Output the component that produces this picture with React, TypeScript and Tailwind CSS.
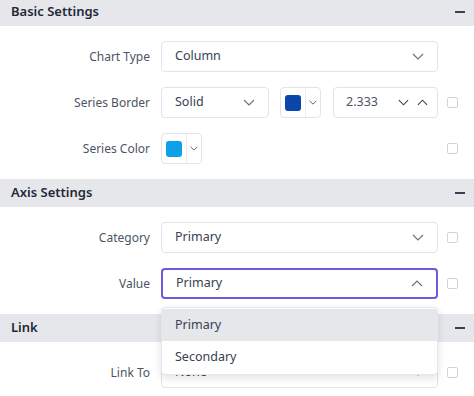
import { ReactNode } from "react";

const font = { fontFamily: '"Noto Sans", "Open Sans", sans-serif' };

const Chevron = ({ up = false, className = "" }: { up?: boolean; className?: string }) => (
  <svg viewBox="0 0 12 7" className={className} fill="none" stroke="currentColor" strokeWidth="1.2">
    {up ? <path d="M1 6l5-5 5 5" /> : <path d="M1 1l5 5 5-5" />}
  </svg>
);

const Check = () => <div className="ml-[9px] h-[11px] w-[11px] rounded-[2px] border border-[#d4d4d8] bg-white" />;

const Header = ({ title, first = false }: { title: string; first?: boolean }) => (
  <div
    className={`flex h-[28px] items-center justify-between bg-[#e6e7eb] pl-[11px] pr-[9px] text-[13px] font-semibold text-[#1f2937] ${
      first ? "-mt-[2px]" : ""
    }`}
  >
    <span>{title}</span>
    <span className="block h-[2px] w-[10px] bg-[#374151]" />
  </div>
);

const Row = ({ label, children, check = true }: { label: string; children: ReactNode; check?: boolean }) => (
  <div className="flex h-[31px] items-center">
    <div className="w-[150px] shrink-0 text-right text-[12px] text-[#4b5563]">{label}</div>
    <div className="ml-[11px] flex w-[277px] items-center">{children}</div>
    {check && <Check />}
  </div>
);

const Select = ({ value, open = false, className = "w-full" }: { value: string; open?: boolean; className?: string }) => (
  <div
    className={`flex h-[31px] items-center justify-between rounded-[4px] bg-white pl-[13px] pr-[13px] text-[12.5px] text-[#374151] ${
      open ? "border-2 border-[#6a5cdc] pl-[12px] pr-[12px]" : "border border-[#e2e4e8]"
    } ${className}`}
  >
    <span>{value}</span>
    <Chevron up={open} className="h-[7px] w-[12px] text-[#6b7280]" />
  </div>
);

const ColorPick = ({ color }: { color: string }) => (
  <div className="flex h-[31px] w-[41px] items-center rounded-[4px] border border-[#e2e4e8] bg-white">
    <div className="ml-[4px] h-[16px] w-[16px] rounded-[3px]" style={{ backgroundColor: color }} />
    <div className="ml-[4px] flex h-full flex-1 items-center justify-center border-l border-[#ececef]">
      <Chevron className="h-[5px] w-[8px] text-[#374151]" />
    </div>
  </div>
);

export default function App() {
  return (
    <div className="h-[396px] w-[474px] overflow-hidden bg-white" style={font}>
      <Header title="Basic Settings" first />
      <div className="flex flex-col gap-[15px] py-[15px]">
        <Row label="Chart Type" check={false}>
          <Select value="Column" />
        </Row>
        <Row label="Series Border">
          <Select value="Solid" className="w-[108px]" />
          <div className="ml-[11px]">
            <ColorPick color="#0b47a8" />
          </div>
          <div className="ml-[12px] flex h-[31px] flex-1 items-center rounded-[4px] border border-[#e2e4e8] pl-[12px] pr-[9px] text-[12.5px] text-[#4b5563]">
            <span className="flex-1">2.333</span>
            <Chevron className="h-[7px] w-[11px] text-[#374151]" />
            <Chevron up className="ml-[8px] h-[7px] w-[11px] text-[#374151]" />
          </div>
        </Row>
        <Row label="Series Color">
          <ColorPick color="#0ea0e8" />
          <div className="flex-1" />
        </Row>
      </div>
      <Header title="Axis Settings" />
      <div className="flex flex-col gap-[15px] py-[15px]">
        <Row label="Category">
          <Select value="Primary" />
        </Row>
        <Row label="Value">
          <div className="relative w-full">
            <Select value="Primary" open />
            <div className="absolute left-0 top-[39px] z-10 w-full rounded-[4px] border border-[#e5e7eb] bg-white py-[1px] shadow-[0_3px_8px_rgba(0,0,0,0.12)]">
              <div className="flex h-[32px] items-center bg-[#e6e7eb] pl-[13px] text-[12.5px] text-[#374151]">Primary</div>
              <div className="flex h-[32px] items-center pl-[13px] text-[12.5px] text-[#374151]">Secondary</div>
            </div>
          </div>
        </Row>
      </div>
      <Header title="Link" />
      <div className="flex flex-col gap-[15px] py-[15px]">
        <Row label="Link To">
          <Select value="None" />
        </Row>
      </div>
    </div>
  );
}
